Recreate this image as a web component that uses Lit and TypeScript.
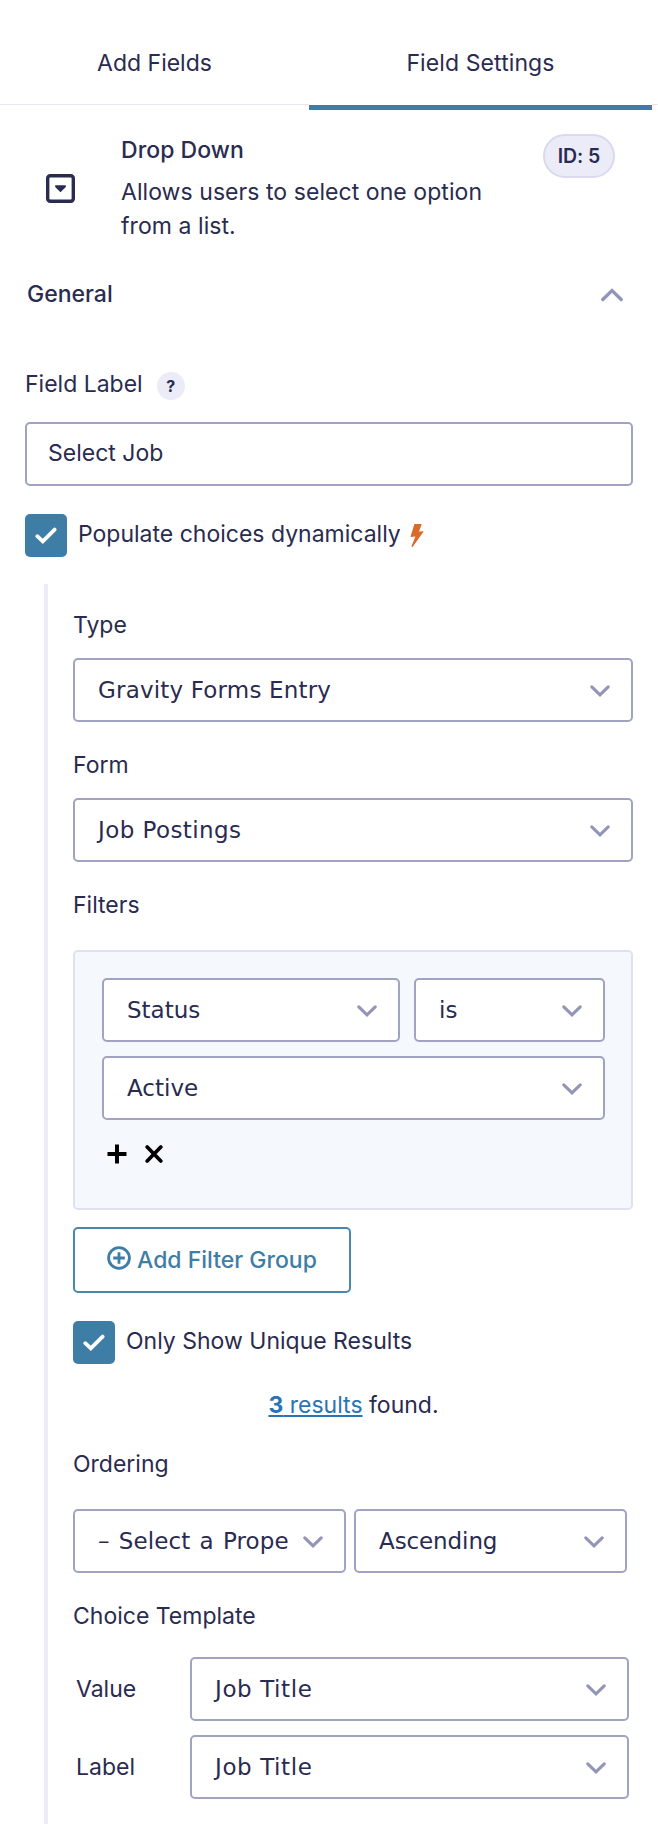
import { LitElement, html, css } from "lit";
import { customElement, property } from "lit/decorators.js";

const check = html`<svg class="check" width="22" height="18" viewBox="0 0 22 18" fill="none"><path d="M2.300 9.200 7.800 14.300 19.600 2.600" stroke="#fff" stroke-width="3.800" stroke-linecap="round" /></svg>`;

@customElement("gf-select")
class GfSelect extends LitElement {
  @property() label = "";
  static styles = css`
    :host { display: block; min-width: 0; }
    .box { box-sizing: border-box; height: 64px; border: 2px solid #a1a3c3; border-radius: 5px; background: #fff; display: flex; align-items: center; justify-content: space-between; padding: 0 21px 0 23px; }
    .text { font: 23px/34px "DejaVu Sans", Verdana, sans-serif; color: #2a2b50; white-space: nowrap; letter-spacing: var(--tracking, 0); word-spacing: var(--word-gap, 0); }
    .chev { flex: none; margin-top: 2px; }
  `;
  render() {
    return html`<div class="box">
      <span class="text">${this.label}</span>
      <svg class="chev" width="20" height="12" viewBox="0 0 20 12" fill="none"><path d="M1.800 1.800 10 9.800l8.200-8" stroke="#9294b8" stroke-width="3.100" stroke-linecap="round" /></svg>
    </div>`;
  }
}

@customElement("app-root")
class AppRoot extends LitElement {
  static styles = css`
    :host { display: block; height: 1824px; overflow: hidden; background: #fff; color: #2a2b50; font: 23px/34px Inter, sans-serif; }
    svg { display: block; flex: none; }
    .tabs { display: flex; box-sizing: border-box; height: 110px; }
    .tab { flex: none; box-sizing: border-box; height: 105px; border-bottom: 1px solid #e6e6f5; padding-top: 46px; text-align: center; }
    .tab.add { width: 309px; }
    .tab.settings { width: 343px; height: 110px; border-bottom: 5px solid #3e7da6; letter-spacing: .1px; }
    .tab.rest { flex: 1; }
    .intro { display: flex; height: 139px; box-sizing: border-box; padding: 23px 43px 0 46px; }
    .intro .kind { margin-top: 41px; }
    .desc { width: 380px; margin-left: 46px; letter-spacing: .06px; }
    .name { font-weight: 500; margin-bottom: 8px; }
    .badge { box-sizing: border-box; height: 44px; width: 72px; margin: 1px 0 0 auto; border: 2px solid #dad9ed; border-radius: 22px; background: #ecebf8; font-size: 19.500px; font-weight: 600; line-height: 40px; text-align: center; white-space: nowrap; letter-spacing: -.1px; }
    .section { display: flex; align-items: center; justify-content: space-between; height: 90px; padding: 0 35px 0 27px; font-weight: 500; }
    .section svg { margin-top: 2px; }
    .field { display: flex; align-items: center; padding-left: 25px; margin-top: 28px; height: 34px; }
    .help { width: 28px; height: 28px; margin: 3px 0 0 14px; border-radius: 50%; background: #ecebf8; font-size: 16px; font-weight: 700; line-height: 29px; text-align: center; }
    .input { box-sizing: border-box; height: 64px; margin: 21px 25px 0; border: 2px solid #a1a3c3; border-radius: 5px; padding: 12px 21px; }
    .toggle { display: flex; height: 43px; }
    .toggle.populate { margin: 28px 0 0 25px; }
    .toggle .copy { margin: 3px 0 0 11px; white-space: nowrap; }
    .mark { flex: none; width: 42px; height: 43px; border-radius: 5px; background: #3e7da6; display: flex; align-items: center; justify-content: center; }
    .bolt { margin: 10px 0 0 9px; }
    .nested { box-sizing: border-box; margin: 27px 25px 0 44px; height: 1240px; border-left: 4px solid #ecebf8; padding: 24px 0 0 25px; }
    .select { margin-top: 16px; }
    .label.next { margin-top: 26px; }
    .filters { box-sizing: border-box; height: 260px; margin-top: 28px; padding: 26px 26px 0 27px; background: #f5f8fc; border: 2px solid #dfe1f0; border-radius: 5px; }
    .pair { display: grid; grid-template-columns: 298px 1fr; gap: 14px; }
    .filters .active { margin-top: 14px; }
    .tools { display: flex; gap: 18px; margin: 24px 0 0 5px; }
    .button { box-sizing: border-box; width: 278px; height: 66px; margin-top: 17px; border: 2px solid #4b88ad; border-radius: 5px; color: #3e7da6; display: flex; padding: 14px 0 0 32px; font-weight: 500; white-space: nowrap; }
    .button svg { margin: 3px 6px 0 0; }
    .unique { margin-top: 28px; }
    .results { margin: 24px 0 0 1px; text-align: center; }
    .link { color: #2974b3; text-decoration: underline; text-decoration-thickness: 2px; text-underline-offset: 2px; }
    .link b { font-weight: 700; }
    .ordering { margin-top: 25px; }
    .order { display: grid; grid-template-columns: 273px 273px; gap: 8px; margin-top: 28px; }
    .row { display: grid; grid-template-columns: 114px 439px; align-items: center; padding-left: 3px; margin-top: 14px; }
    .row.first { margin-top: 24px; }
    .t-entry { --tracking: .18px; }
    .t-post { --tracking: .42px; }
    .t-prop { --tracking: .12px; --word-gap: 1.700px; }
    .t-asc { --tracking: -.1px; }
    .t-job { --tracking: .6px; }
  `;
  render() {
    return html`
      <nav class="tabs">
        <div class="tab add">Add Fields</div>
        <div class="tab settings">Field Settings</div>
        <div class="tab rest"></div>
      </nav>
      <section class="intro">
        <svg class="kind" width="29" height="29" viewBox="0 0 29 29"><rect x="1.700" y="1.700" width="25.600" height="25.600" rx="2.500" fill="none" stroke="#2a2b50" stroke-width="3.400" /><path d="M9.200 11.200h10.600v1.800l-5.300 5.300-5.300-5.300z" fill="#2a2b50" /></svg>
        <div class="desc"><div class="name">Drop Down</div><div>Allows users to select one option from a list.</div></div>
        <div class="badge">ID: 5</div>
      </section>
      <div class="section"><span>General</span><svg width="22" height="14" viewBox="0 0 22 14" fill="none"><path d="M1.800 11.500 11 2.500 20.200 11.500" stroke="#9294b8" stroke-width="3.300" stroke-linecap="round" /></svg></div>
      <div class="field"><span>Field Label</span><span class="help">?</span></div>
      <div class="input">Select Job</div>
      <div class="toggle populate">
        <span class="mark">${check}</span><span class="copy">Populate choices dynamically</span>
        <svg class="bolt" width="14" height="23" viewBox="0 0 14 23"><path d="M4.400 0h7.400L9 7.600 13.800 7.200 2.600 23 1.400 22.400 5.400 12.600.4 13z" fill="#d96a2b" /></svg>
      </div>
      <div class="nested">
        <div class="label">Type</div>
        <gf-select class="select t-entry" label="Gravity Forms Entry"></gf-select>
        <div class="label next">Form</div>
        <gf-select class="select t-post" label="Job Postings"></gf-select>
        <div class="label next">Filters</div>
        <div class="filters">
          <div class="pair"><gf-select label="Status"></gf-select><gf-select label="is"></gf-select></div>
          <gf-select class="active" label="Active"></gf-select>
          <div class="tools">
            <svg width="20" height="20" viewBox="0 0 20 20"><path d="M8 .5h4V8h7.500v4H12v7.500H8V12H.5V8H8z" fill="#000" /></svg>
            <svg width="18" height="20" viewBox="0 0 18 20" fill="none"><path d="M2.200 3l13.600 14M15.800 3 2.200 17" stroke="#000" stroke-width="3.700" stroke-linecap="round" /></svg>
          </div>
        </div>
        <div class="button"><svg width="24" height="24" viewBox="0 0 24 24" fill="none" stroke="#3e7da6" stroke-width="2.800"><circle cx="12" cy="12" r="10.400" /><path d="M12 6.200v11.600M6.200 12h11.600" /></svg>Add Filter Group</div>
        <div class="toggle unique"><span class="mark">${check}</span><span class="copy">Only Show Unique Results</span></div>
        <div class="results"><span class="link"><b>3</b> results</span> found.</div>
        <div class="label ordering">Ordering</div>
        <div class="order"><gf-select class="t-prop" label="– Select a Prope"></gf-select><gf-select class="t-asc" label="Ascending"></gf-select></div>
        <div class="label next">Choice Template</div>
        <div class="row first"><span>Value</span><gf-select class="t-job" label="Job Title"></gf-select></div>
        <div class="row"><span>Label</span><gf-select class="t-job" label="Job Title"></gf-select></div>
      </div>
    `;
  }
}
